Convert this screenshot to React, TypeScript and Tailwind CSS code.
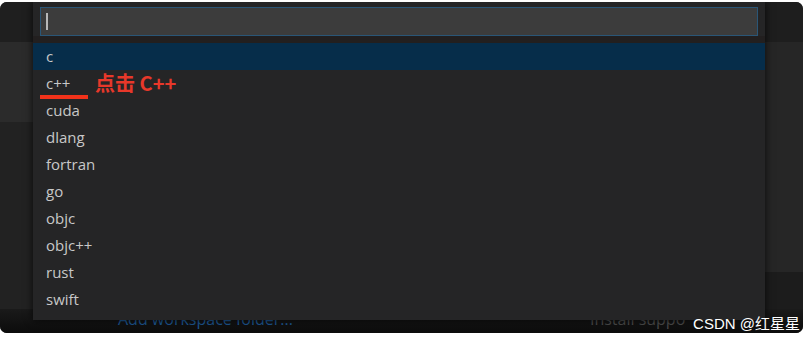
const languages = ["c", "c++", "cuda", "dlang", "fortran", "go", "objc", "objc++", "rust", "swift"];

const QuickPickRow = ({ label, selected }: { label: string; selected: boolean }) => {
  return (
    <div
      className={`relative flex h-[27px] items-center pl-[13px] text-[15px] text-[#c8c8c8] ${
        selected ? "bg-[#062d4a]" : ""
      }`}
    >
      <span>{label}</span>
      {label === "c++" && (
        <>
          <div className="absolute left-[7px] top-[25px] h-[4px] w-[48px] bg-[#f2321a]" />
          <span className="absolute left-[62px] top-[1px] text-[20px] font-bold leading-[24px] text-[#e8382a] [font-family:'Noto_Sans_CJK_SC','Liberation_Sans',sans-serif]">
            点击 C++
          </span>
        </>
      )}
    </div>
  );
};

export default function App() {
  return (
    <div className="h-[342px] w-[805px] bg-white pt-[2px] [font-family:'Open_Sans','Noto_Sans',sans-serif]">
      <div className="relative flex h-[331px] w-[803px] flex-col overflow-hidden rounded-[7px] bg-[#1e1e1e]">
        <div className="flex flex-1">
          <div className="flex w-[33px] flex-col">
            <div className="h-[40px] bg-[#1f1f1f]" />
            <div className="h-[80px] bg-[#2b2b2b]" />
            <div className="flex-1 bg-[#222222]" />
          </div>
          <div className="flex-1 bg-[#222222]" />
          <div className="flex w-[38px] flex-col">
            <div className="h-[40px] bg-[#1e1e1e]" />
            <div className="h-[230px] bg-[#262626]" />
            <div className="flex-1 bg-[#1c1c1c]" />
          </div>
        </div>
        <div className="flex h-[24px] items-start bg-gradient-to-b from-[#1a1a1a] to-[#0c0c0c] text-[16px] leading-[20px]">
          <span className="ml-[118px] text-[#1d5690]">Add workspace folder...</span>
          <span className="ml-[297px] whitespace-nowrap text-[#4a4a4a]">Install suppo</span>
        </div>

        <div className="absolute left-[33px] top-0 flex h-[318px] w-[732px] flex-col bg-[#252526] shadow-[0_0_8px_rgba(0,0,0,0.75)]">
          <div className="px-[7px] pt-[5px]">
            <div className="flex h-[29px] items-center border border-[#2a5677] bg-[#3c3c3c] pl-[5px]">
              <div className="h-[17px] w-[2px] bg-[#b8b8b8]" />
            </div>
          </div>
          <div className="h-[7px] bg-[#221f1f]" />
          {languages.map((lang) => (
            <QuickPickRow key={lang} label={lang} selected={lang === "c"} />
          ))}
        </div>

        <span className="absolute bottom-[0px] right-[3px] text-[15px] leading-[18px] text-white [font-family:'Liberation_Sans','Noto_Sans_CJK_SC',sans-serif]">
          CSDN @红星星
        </span>
      </div>
    </div>
  );
}
